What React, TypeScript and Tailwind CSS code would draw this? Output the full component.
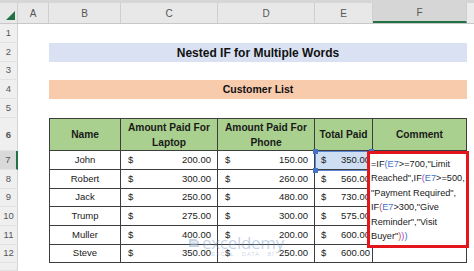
const COLS = 'grid grid-cols-[18px_31px_72px_97px_97px_58px_94px_7px]'

const letters = ['A', 'B', 'C', 'D', 'E', 'F']

const data = [
  { name: 'John', laptop: '200.00', phone: '150.00', total: '350.00' },
  { name: 'Robert', laptop: '300.00', phone: '260.00', total: '560.00' },
  { name: 'Jack', laptop: '250.00', phone: '480.00', total: '730.00' },
  { name: 'Trump', laptop: '275.00', phone: '300.00', total: '575.00' },
  { name: 'Muller', laptop: '400.00', phone: '200.00', total: '600.00' },
  { name: 'Steve', laptop: '350.00', phone: '250.00', total: '600.00' },
]

const rowHeights = ['h-[19px]', 'h-[19px]', 'h-[18px]', 'h-[19px]', 'h-[19px]', 'h-[18px]']

function RowNum({ n, active }: { n?: number; active?: boolean }) {
  return (
    <div
      className={`flex items-center justify-center text-[9.5px] text-[#555] border-b border-[#e2e2e2] ${
        active ? 'bg-[#d9d9d9] border-r-2 border-r-[#217346]' : 'bg-[#efefef] border-r border-r-[#d4d4d4]'
      }`}
    >
      {n}
    </div>
  )
}

function Money({ value }: { value: string }) {
  return (
    <div className="flex items-center justify-between pl-[7px] pr-[6px] border-r border-b border-[#3d3d3d]">
      <span>$</span>
      <span>{value}</span>
    </div>
  )
}

const E = ({ children }: { children: string }) => <span className="text-[#4472c4]">{children}</span>

export default function App() {
  return (
    <div className="relative w-[474px] h-[271px] overflow-hidden bg-white font-['Liberation_Sans',Arial,sans-serif] text-[#111]">
      {/* ribbon edge */}
      <div className="h-[3px] bg-[#d6d6d6]" />

      {/* column headers */}
      <div className={`${COLS} h-[21px] bg-[#e8e8e8] border-b border-[#c8c8c8] text-[10px] text-[#555]`}>
        <div className="flex items-end justify-end pr-[2px] pb-[3px] border-r border-[#d0d0d0]">
          <svg width="9" height="9" viewBox="0 0 9 9">
            <polygon points="9,0 9,9 0,9" fill="#217346" />
          </svg>
        </div>
        {letters.map(l => (
          <div
            key={l}
            className={`flex items-center justify-center border-r border-[#cfcfcf] ${
              l === 'F' ? 'bg-[#d6d6d6] border-b-2 border-b-[#217346]' : ''
            }`}
          >
            {l}
          </div>
        ))}
        <div className="bg-[#ececec]" />
      </div>

      {/* row 1 */}
      <div className={`${COLS} h-[19px]`}>
        <RowNum n={1} />
      </div>

      {/* row 2 title */}
      <div className={`${COLS} h-[19px]`}>
        <RowNum n={2} />
        <div />
        <div className="col-span-5 flex items-center justify-center bg-[#d9e1f2] font-bold text-[12px]">
          Nested IF for Multiple Words
        </div>
      </div>

      {/* row 3 */}
      <div className={`${COLS} h-[18px]`}>
        <RowNum n={3} />
      </div>

      {/* row 4 */}
      <div className={`${COLS} h-[19px]`}>
        <RowNum n={4} />
        <div />
        <div className="col-span-5 flex items-center justify-center bg-[#f8cbad] font-bold text-[10.5px]">
          Customer List
        </div>
      </div>

      {/* row 5 */}
      <div className={`${COLS} h-[19px]`}>
        <RowNum n={5} />
      </div>

      {/* row 6 table head */}
      <div className={`${COLS} h-[33px] text-[10.2px] font-bold leading-[15px] text-[#1a1a1a]`}>
        <RowNum n={6} />
        <div />
        <div className="flex items-center justify-center bg-[#a9d08e] border border-[#3d3d3d]">Name</div>
        <div className="flex items-center justify-center text-center bg-[#a9d08e] border-y border-r border-[#3d3d3d]">
          Amount Paid For
          <br />
          Laptop
        </div>
        <div className="flex items-center justify-center text-center bg-[#a9d08e] border-y border-r border-[#3d3d3d]">
          Amount Paid For
          <br />
          Phone
        </div>
        <div className="flex items-center justify-center bg-[#a9d08e] border-y border-r border-[#3d3d3d]">Total Paid</div>
        <div className="flex items-center justify-center bg-[#a9d08e] border-y border-r border-[#3d3d3d]">Comment</div>
      </div>

      {/* data rows */}
      {data.map((r, i) => (
        <div key={r.name} className={`${COLS} ${rowHeights[i]} text-[9.5px] text-[#1a1a1a]`}>
          <RowNum n={7 + i} active={i === 0} />
          <div />
          <div className="flex items-center justify-center border-l border-r border-b border-[#3d3d3d]">{r.name}</div>
          <Money value={r.laptop} />
          <Money value={r.phone} />
          <div
            className={`flex items-center justify-between pl-[6px] pr-[2px] border-r border-b border-[#3d3d3d] ${
              i === 0 ? 'bg-[#cfdff3]' : ''
            }`}
          >
            <span>$</span>
            <span>{r.total}</span>
          </div>
          <div className="border-r border-b border-[#3d3d3d]" />
        </div>
      ))}

      {/* row 13 */}
      <div className={`${COLS} h-[8px]`}>
        <RowNum />
      </div>

      {/* E7 reference highlight */}
      <div className="absolute left-[315px] top-[151px] w-[57px] h-[20px] border border-[#5b87d6] pointer-events-none">
        <span className="absolute -left-[3px] -top-[3px] w-[5px] h-[5px] bg-[#4472c4]" />
        <span className="absolute -left-[3px] -bottom-[3px] w-[5px] h-[5px] bg-[#4472c4]" />
        <span className="absolute -right-[3px] -top-[3px] w-[5px] h-[5px] bg-[#4472c4]" />
      </div>

      {/* formula being edited */}
      <div className="absolute left-[367px] top-[151px] w-[102px] h-[97px] bg-white border-[3px] border-[#e3161c] pl-[1px] pt-[3px] text-[9.2px] leading-[14.4px] whitespace-nowrap text-[#1a1a1a]">
        <div>
          =IF<span className="text-[#4472c4]">(</span>
          <E>E7</E>&gt;=700,"Limit
        </div>
        <div>
          Reached",IF<span className="text-[#a347b5]">(</span>
          <E>E7</E>&gt;=500,
        </div>
        <div>"Payment Required",</div>
        <div>
          IF<span className="text-[#c0504d]">(</span>
          <E>E7</E>&gt;300,"Give
        </div>
        <div>Reminder","Visit</div>
        <div>
          Buyer"<span className="text-[#c0504d]">)</span>
          <span className="text-[#a347b5]">)</span>
          <span className="text-[#4472c4]">)</span>
        </div>
      </div>

      {/* watermark */}
      <div className="absolute left-[188px] top-[234px] flex flex-col items-center opacity-40 pointer-events-none">
        <div className="flex items-center gap-[2px]">
          <svg width="12" height="12" viewBox="0 0 12 12">
            <path d="M1 2h7l3 3v5H1z" fill="#6f94c4" />
            <path d="M3 5h6M3 7.5h6" stroke="#fff" strokeWidth="1" />
          </svg>
          <span className="text-[17px] leading-[17px] text-[#6f94c4] font-['Open_Sans',sans-serif] tracking-[-0.3px]">exceldemy</span>
        </div>
        <span className="text-[5.5px] leading-[6px] tracking-[1px] text-[#7f9fc9] ml-[14px]">EXCEL · DATA · BI</span>
      </div>
    </div>
  )
}
